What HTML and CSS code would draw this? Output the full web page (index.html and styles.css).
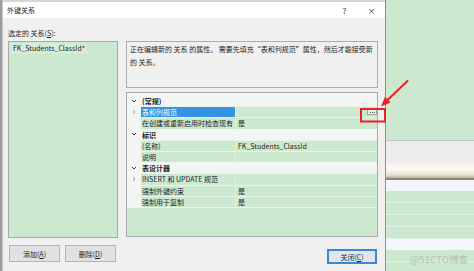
FILE: index.html
```html
<!DOCTYPE html>
<html lang="zh-CN">
<head>
  <meta charset="UTF-8">
  <title>外键关系</title>
  <link rel="stylesheet" href="styles.css">
</head>
<body>
  <div class="edge"></div>

  <div class="dialog">
    <div class="titlebar">
      <span class="title">外键关系</span>
      <span class="tb-btn">?</span>
      <span class="tb-btn">×</span>
    </div>

    <div class="dialog-body">
      <div class="left-col">
        <div class="label">选定的 关系(<u>S</u>):</div>
        <div class="listbox">
          <div class="list-item">FK_Students_ClassId*</div>
        </div>
        <div class="btn-row">
          <button class="btn">添加(<u>A</u>)</button>
          <button class="btn">删除(<u>D</u>)</button>
        </div>
      </div>

      <div class="right-col">
        <div class="desc">
          <div class="desc-line">正在编辑新的 关系 的属性。 需要先填充“表和列规范”属性，然后才能接受新</div>
          <div class="desc-line">的 关系。</div>
        </div>

        <div class="grid">
          <div class="row cat">
            <span class="exp"><svg class="chev" viewBox="0 0 6 4"><path d="M1 1l2 2 2-2"/></svg></span>
            <span class="name">(常规)</span>
          </div>
          <div class="row">
            <span class="exp"><svg class="arrow" viewBox="0 0 4 6"><path d="M1 1l2 2-2 2"/></svg></span>
            <span class="name sel">表和列规范</span>
            <span class="val val-btn">
              <span class="dots"><svg viewBox="0 0 7 3"><rect x="1" y="1" width="1" height="1"/><rect x="3" y="1" width="1" height="1"/><rect x="5" y="1" width="1" height="1"/></svg></span>
            </span>
          </div>
          <div class="row">
            <span class="exp"></span>
            <span class="name">在创建或重新启用时检查现有</span>
            <span class="val">是</span>
          </div>
          <div class="row cat">
            <span class="exp"><svg class="chev" viewBox="0 0 6 4"><path d="M1 1l2 2 2-2"/></svg></span>
            <span class="name">标识</span>
          </div>
          <div class="row">
            <span class="exp"></span>
            <span class="name">(名称)</span>
            <span class="val">FK_Students_ClassId</span>
          </div>
          <div class="row">
            <span class="exp"></span>
            <span class="name">说明</span>
            <span class="val"></span>
          </div>
          <div class="row cat">
            <span class="exp"><svg class="chev" viewBox="0 0 6 4"><path d="M1 1l2 2 2-2"/></svg></span>
            <span class="name">表设计器</span>
          </div>
          <div class="row">
            <span class="exp"><svg class="arrow" viewBox="0 0 4 6"><path d="M1 1l2 2-2 2"/></svg></span>
            <span class="name">INSERT 和 UPDATE 规范</span>
            <span class="val"></span>
          </div>
          <div class="row">
            <span class="exp"></span>
            <span class="name">强制外键约束</span>
            <span class="val">是</span>
          </div>
          <div class="row">
            <span class="exp"></span>
            <span class="name">强制用于复制</span>
            <span class="val">是</span>
          </div>
          <div class="grid-fill"></div>
        </div>

        <div class="footer">
          <button class="btn btn-default">关闭(<u>C</u>)</button>
        </div>
      </div>
    </div>
  </div>

  <div class="backdrop">
    <div class="band green-top"></div>
    <div class="band gray"></div>
    <div class="band cream"></div>
    <div class="band pale"></div>
    <div class="band green-row"></div>
    <div class="band green-row"></div>
    <div class="band green-row"></div>
    <div class="band green-row"></div>
    <div class="band pale"></div>
    <div class="band green-row"></div>
    <div class="band green-rest"></div>
    <div class="watermark">@51CTO博客</div>
  </div>

  <!-- red annotation over the "..." button -->
  <svg class="annot" viewBox="0 0 474 271">
    <rect x="361" y="109" width="24" height="12.5" fill="none" stroke="#e3242b" stroke-width="2"/>
    <line x1="407.5" y1="81" x2="388" y2="99.5" stroke="#e3242b" stroke-width="2" stroke-linecap="round"/>
    <polygon points="381,106.5 385,96.8 390.6,102.4" fill="#e3242b"/>
  </svg>
</body>
</html>
```

FILE: styles.css
```css
body {
  margin: 0;
  width: 474px;
  height: 271px;
  overflow: hidden;
  display: flex;
  position: relative;
  font-family: "Noto Sans CJK SC", "Noto Sans", sans-serif;
  font-size: 7px;
  color: #1e1e1e;
  background: #cce8cf;
}

.edge {
  width: 2px;
  background: #9a9d9b;
}

.dialog {
  width: 382px;
  display: flex;
  flex-direction: column;
  background: #f0f0f0;
  border-left: 1px solid #c9c9c9;
  border-right: 1px solid #8f8f8f;
}

.titlebar {
  height: 16px;
  display: flex;
  align-items: center;
  background: #ffffff;
  border-top: 2px solid #d6d6d6;
}

.title {
  flex: 1;
  padding-left: 4px;
  line-height: 16px;
}

.tb-btn {
  width: 27px;
  text-align: center;
  font-size: 8px;
  color: #333;
}

.dialog-body {
  flex: 1;
  display: flex;
  gap: 8px;
  padding: 0 7px 0 5px;
}

.left-col {
  width: 110px;
  display: flex;
  flex-direction: column;
  padding-top: 10px;
}

.label {
  line-height: 10px;
  height: 10px;
  margin-bottom: 3px;
}

.listbox {
  height: 197px;
  box-sizing: border-box;
  background: #cce8cf;
  border: 1px solid #a6aba7;
  padding: 1px 2px;
}

.list-item {
  display: inline-block;
  padding: 0 2px;
  line-height: 11px;
  background: #d6ecd8;
}

.btn-row {
  display: flex;
  gap: 5px;
  margin-top: 7px;
  padding-left: 1px;
}

.btn {
  width: 51px;
  height: 17px;
  padding: 0;
  font-family: inherit;
  font-size: 7px;
  color: #1e1e1e;
  background: #e1e1e1;
  border: 1px solid #b4b4b4;
}

.right-col {
  flex: 1;
  display: flex;
  flex-direction: column;
  padding-top: 23px;
}

.desc {
  height: 47px;
  box-sizing: border-box;
  border: 1px solid #acacac;
  background: #f0f0f0;
  padding: 1px 3px;
}

.desc-line {
  white-space: nowrap;
  line-height: 12.5px;
}

.grid {
  height: 145px;
  box-sizing: border-box;
  margin-top: 4px;
  border: 1px solid #a9a9a9;
  background: #f3f5f3;
  padding-top: 2px;
  display: flex;
  flex-direction: column;
}

.row {
  display: grid;
  grid-template-columns: 14px 94px 1fr;
  height: 11.2px;
  line-height: 10.2px;
}

.row > span {
  box-sizing: border-box;
  white-space: nowrap;
  overflow: hidden;
}

.exp {
  display: flex;
  align-items: center;
  justify-content: center;
}

.chev {
  width: 6px;
  height: 4px;
  fill: none;
  stroke: #3c3c3c;
  stroke-width: 1;
}

.arrow {
  width: 4px;
  height: 6px;
  fill: none;
  stroke: #9a9a9a;
  stroke-width: 1;
}

.name,
.val {
  background: #cce8cf;
  border-top: 1px solid #e9f4ea;
  padding-left: 1px;
}

.val {
  border-left: 1px solid #e2f0e3;
  padding-left: 2px;
}

.val-btn {
  display: flex;
  justify-content: flex-end;
  align-items: center;
}

.dots {
  width: 10px;
  height: 6px;
  box-sizing: border-box;
  display: flex;
  align-items: center;
  justify-content: center;
  background: #ececec;
  border: 1px solid #a3a3a3;
}

.dots svg {
  width: 7px;
  height: 3px;
  fill: #555;
}

.name.sel {
  background: #3592e0;
  color: #ffffff;
}

.cat .name {
  grid-column: 2 / 4;
  background: #f3f5f3;
  border-top: 1px solid #f3f5f3;
  font-weight: bold;
}

.grid-fill {
  flex: 1;
  background: #cce8cf;
  border-top: 1px solid #e9f4ea;
}

.footer {
  display: flex;
  justify-content: flex-end;
  margin-top: 12px;
  padding-right: 1px;
}

.btn-default {
  width: 50px;
  height: 15px;
  border: 2px solid #3d86d3;
  background: #e3e6e9;
}

.backdrop {
  flex: 1;
  display: flex;
  flex-direction: column;
  position: relative;
}

.band {
  flex-shrink: 0;
}

.green-top {
  height: 140px;
  background: #cce8cf;
  border-bottom: 1px solid #c2c4c2;
}

.gray {
  height: 22px;
  background: #ececec;
}

.cream {
  height: 15px;
  background: linear-gradient(#f3f1ea, #fbfaf3 45%, #e6e1d2 80%, #b7ae9b);
  border-bottom: 2px solid #8c8474;
}

.pale {
  height: 11px;
  background: #f3f6fa;
}

.green-row {
  height: 11px;
  background: #cce8cf;
  border-bottom: 1px solid #e3f1e4;
}

.green-rest {
  flex: 1;
  background: #cce8cf;
}

.watermark {
  position: absolute;
  left: 24px;
  bottom: 5px;
  font-size: 9.5px;
  color: #b4bdb5;
  letter-spacing: 0.2px;
}

.annot {
  position: absolute;
  left: 0;
  top: 0;
  width: 474px;
  height: 271px;
  pointer-events: none;
}
```
